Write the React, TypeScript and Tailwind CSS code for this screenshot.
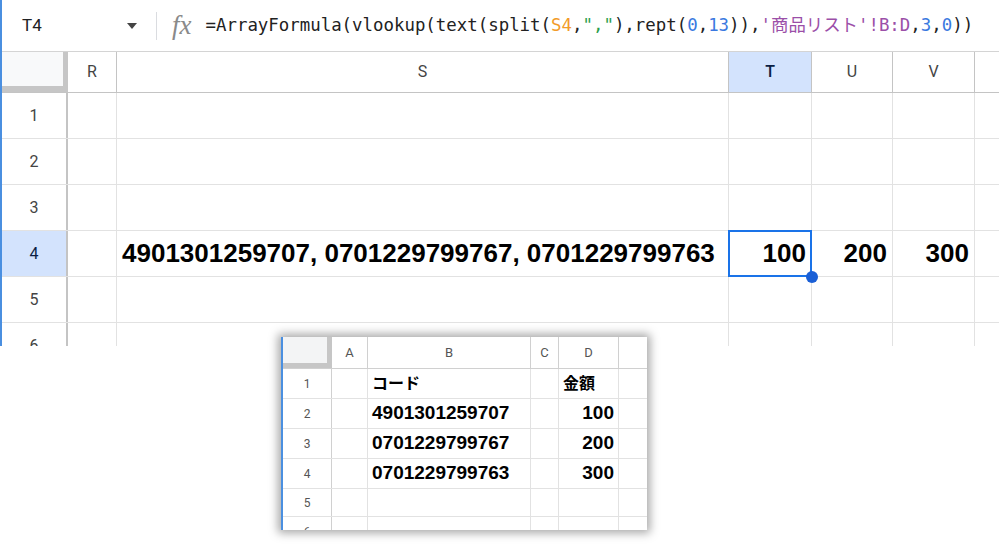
import React from 'react';

const mainCols = [
  { key: 'R', w: 'w-[49px]' },
  { key: 'S', w: 'w-[612px]' },
  { key: 'T', w: 'w-[83px]' },
  { key: 'U', w: 'w-[81px]' },
  { key: 'V', w: 'w-[82px]' },
];

const ui = { fontFamily: 'Roboto, "Liberation Sans", sans-serif' };
const bold = { fontFamily: '"Liberation Sans", Arial, sans-serif' };
const jp = { fontFamily: '"Liberation Sans", "Noto Sans CJK JP", sans-serif' };
const mono = { fontFamily: '"DejaVu Sans Mono", "Noto Sans CJK JP", monospace' };

function FormulaBar() {
  return (
    <div className="flex h-[52px] items-center border-b border-[#d4d4d4]" style={ui}>
      <div className="w-[110px] pl-[20px] text-[17px] text-[#202124]">T4</div>
      <div className="flex w-[40px] justify-center">
        <span className="block h-0 w-0 border-x-[5px] border-t-[6px] border-x-transparent border-t-[#444]" />
      </div>
      <div className="ml-[4px] h-[28px] w-px bg-[#dadce0]" />
      <span
        className="ml-[15px] mr-[14px] text-[27px] italic leading-none text-[#8a8a8a]"
        style={{ fontFamily: '"Liberation Serif", serif' }}
      >
        fx
      </span>
      <div className="whitespace-nowrap text-[17.4px] text-[#222]" style={mono}>
        =ArrayFormula(vlookup(text(split(<span className="text-[#f29b2a]">S4</span>,
        <span className="text-[#2a9d4a]">","</span>),rept(<span className="text-[#3a79e0]">0</span>,
        <span className="text-[#3a79e0]">13</span>)),
        <span className="text-[#9b4fa8]">'商品リスト'!B:D</span>,<span className="text-[#3a79e0]">3</span>,
        <span className="text-[#3a79e0]">0</span>))
      </div>
    </div>
  );
}

function MainSheet() {
  const rows = [1, 2, 3, 4, 5, 6];
  return (
    <div className="h-[346px] overflow-hidden border-l-2 border-[#4a8fe0] bg-white">
      <FormulaBar />
      {/* column headers */}
      <div className="flex h-[41px] border-b border-[#c4c4c4]" style={ui}>
        <div className="w-[66px] shrink-0 bg-white">
          <div className="h-full border-b-[6px] border-r-[5px] border-[#c6c6c6] bg-[#f8f9fa]" />
        </div>
        {mainCols.map((c) => (
          <div
            key={c.key}
            className={`${c.w} flex shrink-0 items-center justify-center border-r border-[#c4c4c4] text-[16px] ${
              c.key === 'T' ? 'bg-[#d3e3fd] font-medium text-[#0b1f44]' : 'text-[#444]'
            }`}
          >
            {c.key}
          </div>
        ))}
        <div className="flex-1" />
      </div>
      {rows.map((r) => (
        <div key={r} className="flex h-[46px] border-b border-[#e2e2e2]">
          <div
            className={`flex w-[66px] shrink-0 items-center justify-center border-r-2 border-[#c4c4c4] text-[16px] ${
              r === 4 ? 'bg-[#d3e3fd] text-[#0b1f44]' : 'text-[#444]'
            }`}
            style={ui}
          >
            {r}
          </div>
          <div className="w-[49px] shrink-0 border-r border-[#e2e2e2]" />
          <div className="flex w-[612px] shrink-0 items-center border-r border-[#e2e2e2] pl-[5px]">
            {r === 4 && (
              <span className="whitespace-nowrap text-[26px] font-bold text-black" style={bold}>
                4901301259707, 0701229799767, 0701229799763
              </span>
            )}
          </div>
          <div className="relative flex w-[83px] shrink-0 items-center justify-end border-r border-[#e2e2e2] pr-[5px]">
            {r === 4 && (
              <>
                <span className="text-[26px] font-bold text-black" style={bold}>
                  100
                </span>
                <div className="absolute -bottom-px -left-px -right-px -top-px border-2 border-[#1a73e8]" />
                <div className="absolute -bottom-[7px] -right-[7px] z-10 h-[12px] w-[12px] rounded-full bg-[#1a5fd6]" />
              </>
            )}
          </div>
          <div className="flex w-[81px] shrink-0 items-center justify-end border-r border-[#e2e2e2] pr-[5px]">
            {r === 4 && (
              <span className="text-[26px] font-bold text-black" style={bold}>
                200
              </span>
            )}
          </div>
          <div className="flex w-[82px] shrink-0 items-center justify-end border-r border-[#e2e2e2] pr-[5px]">
            {r === 4 && (
              <span className="text-[26px] font-bold text-black" style={bold}>
                300
              </span>
            )}
          </div>
          <div className="flex-1" />
        </div>
      ))}
    </div>
  );
}

const listRows = [
  { n: 1, b: 'コード', d: '金額', head: true },
  { n: 2, b: '4901301259707', d: '100' },
  { n: 3, b: '0701229799767', d: '200' },
  { n: 4, b: '0701229799763', d: '300' },
  { n: 5, b: '', d: '' },
  { n: 6, b: '', d: '' },
];

function ListSheet() {
  return (
    <div className="absolute left-[281px] top-[337px] h-[193px] w-[366px] overflow-hidden border-l-2 border-[#4a8fe0] bg-white shadow-[0_0_9px_3px_rgba(0,0,0,0.35)]">
      <div className="flex h-[32px] border-b border-[#d0d0d0]" style={ui}>
        <div className="w-[49px] shrink-0">
          <div className="h-full border-b-[5px] border-r-[5px] border-[#c6c6c6] bg-[#f3f4f5]" />
        </div>
        <div className="flex w-[36px] shrink-0 items-center justify-center border-r border-[#d0d0d0] text-[13px] text-[#555]">A</div>
        <div className="flex w-[163px] shrink-0 items-center justify-center border-r border-[#d0d0d0] text-[13px] text-[#555]">B</div>
        <div className="flex w-[28px] shrink-0 items-center justify-center border-r border-[#d0d0d0] text-[13px] text-[#555]">C</div>
        <div className="flex w-[60px] shrink-0 items-center justify-center border-r border-[#d0d0d0] text-[13px] text-[#555]">D</div>
        <div className="flex-1" />
      </div>
      {listRows.map((r) => (
        <div key={r.n} className={`flex border-b border-[#e2e2e2] ${r.n === 5 ? 'h-[28px]' : 'h-[30px]'}`}>
          <div
            className="flex w-[49px] shrink-0 items-center justify-center border-r border-[#d0d0d0] text-[12px] text-[#555]"
            style={ui}
          >
            {r.n}
          </div>
          <div className="w-[36px] shrink-0 border-r border-[#e2e2e2]" />
          <div className="flex w-[163px] shrink-0 items-center border-r border-[#e2e2e2] pl-[4px]">
            <span className={`font-bold text-black ${r.head ? 'text-[16px]' : 'text-[19px]'}`} style={jp}>
              {r.b}
            </span>
          </div>
          <div className="w-[28px] shrink-0 border-r border-[#e2e2e2]" />
          <div
            className={`flex w-[60px] shrink-0 items-center border-r border-[#e2e2e2] ${
              r.head ? 'justify-start pl-[4px]' : 'justify-end pr-[4px]'
            }`}
          >
            <span className={`font-bold text-black ${r.head ? 'text-[16px]' : 'text-[19px]'}`} style={jp}>
              {r.d}
            </span>
          </div>
          <div className="flex-1" />
        </div>
      ))}
    </div>
  );
}

export default function App() {
  return (
    <div className="relative h-[547px] w-[999px] overflow-hidden bg-white">
      <MainSheet />
      <ListSheet />
    </div>
  );
}
